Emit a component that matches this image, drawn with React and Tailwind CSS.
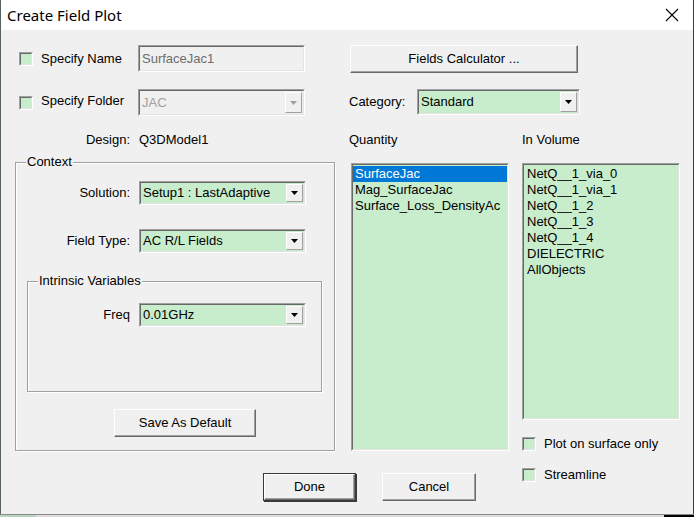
import React from 'react';

const font = { fontFamily: '"Liberation Sans", Arial, sans-serif' };

// sunken 3D field (classic windows)
const Sunken = ({ className = '', inner = '', children }) => (
  <div className={`border border-t-[#a0a0a0] border-l-[#a0a0a0] border-b-white border-r-white ${className}`}>
    <div className={`h-full w-full border border-t-[#696969] border-l-[#696969] border-b-[#e3e3e3] border-r-[#e3e3e3] ${inner}`}>
      {children}
    </div>
  </div>
);

const Check = () => (
  <Sunken className="h-[14px] w-[14px] shrink-0" inner="bg-[#c7edcc]" />
);

const Arrow = ({ disabled }) => (
  <div className="flex h-full w-[17px] shrink-0 items-center justify-center border border-t-white border-l-white border-b-[#a0a0a0] border-r-[#a0a0a0] bg-[#f0f0f0]">
    <svg width="8" height="4" viewBox="0 0 8 4">
      <path d="M0 0h7L3.5 4z" fill={disabled ? '#a0a0a0' : '#000'} />
    </svg>
  </div>
);

const Combo = ({ value, w = 'w-[167px]', h = 'h-[24px]', disabled }) => (
  <Sunken className={`${w} ${h} shrink-0`} inner={`flex items-stretch p-[1px] ${disabled ? 'bg-[#f0f0f0]' : 'bg-[#c7edcc]'}`}>
    <span className={`flex flex-1 items-center pl-[1px] ${disabled ? 'text-[#a0a0a0]' : 'text-black'}`}>{value}</span>
    <Arrow disabled={disabled} />
  </Sunken>
);

const Button = ({ children, className = '', isDefault }) => (
  <div className={`${isDefault ? 'border border-[#3a3a3a] shadow-[1px_1px_0_#3a3a3a]' : ''} ${className}`}>
    <div className="flex h-full w-full items-center justify-center border border-t-white border-l-white border-b-[#696969] border-r-[#696969] bg-[#f0f0f0] shadow-[inset_-1px_-1px_0_#a0a0a0]">
      {children}
    </div>
  </div>
);

const Group = ({ label, className = '', children }) => (
  <div className={`relative border border-[#a0a0a0] shadow-[inset_1px_1px_0_#fff,1px_1px_0_#fff] ${className}`}>
    <span className="absolute -top-[9px] left-[10px] bg-[#f0f0f0] px-[1px] leading-[16px]">{label}</span>
    {children}
  </div>
);

export default function App() {
  const quantities = ['SurfaceJac', 'Mag_SurfaceJac', 'Surface_Loss_DensityAc'];
  const volumes = ['NetQ__1_via_0', 'NetQ__1_via_1', 'NetQ__1_2', 'NetQ__1_3', 'NetQ__1_4', 'DIELECTRIC', 'AllObjects'];

  return (
    <div className="h-[517px] w-[694px] overflow-hidden bg-[#f0f0f0] text-[13px] text-black" style={font}>
      <div className="h-[514px] border-l border-r border-l-[#56625a] border-r-[#3c3c3c]">
        {/* title bar */}
        <div className="flex h-[30px] items-center justify-between bg-white pl-[6px] pr-[14px]">
          <span className="text-[15px] text-black" style={{ fontFamily: '"Noto Sans", "Open Sans", sans-serif' }}>
            Create Field Plot
          </span>
          <svg width="14" height="14" viewBox="0 0 14 14">
            <path d="M1 1l12 12M13 1L1 13" stroke="#000" strokeWidth="1.1" />
          </svg>
        </div>

        {/* top section */}
        <div className="flex pl-[14px]">
          <div className="w-[320px]">
            <div className="mt-[15px] flex h-[27px] items-center">
              <div className="ml-[4px]"><Check /></div>
              <span className="ml-[8px] w-[97px]">Specify Name</span>
              <Sunken className="h-[27px] w-[167px]" inner="bg-[#f0f0f0] px-[2px] pt-[2px] text-[#6d6d6d]">
                SurfaceJac1
              </Sunken>
            </div>
            <div className="mt-[17px] flex h-[27px] items-center">
              <div className="ml-[4px]"><Check /></div>
              <span className="ml-[8px] w-[97px] -translate-y-[2px]">Specify Folder</span>
              <Combo value="JAC" h="h-[27px]" disabled />
            </div>
            <div className="mt-[16px] flex h-[16px] items-center">
              <span className="w-[115px] text-right">Design:</span>
              <span className="ml-[9px]">Q3DModel1</span>
            </div>
          </div>

          <div className="ml-[14px] w-[331px]">
            <Button className="ml-[1px] mt-[15px] h-[28px] w-[228px]">Fields Calculator ...</Button>
            <div className="mt-[16px] flex h-[26px] items-center">
              <span className="w-[68px]">Category:</span>
              <Combo value="Standard" w="w-[163px]" h="h-[26px]" />
            </div>
            <div className="mt-[17px] flex h-[16px] items-center">
              <span className="w-[173px]">Quantity</span>
              <span>In Volume</span>
            </div>
          </div>
        </div>

        {/* middle + bottom */}
        <div className="flex pl-[14px]">
          <div className="w-[494px]">
            <div className="flex">
              <Group label="Context" className="mt-[14px] h-[289px] w-[320px]">
                <div className="flex items-center pt-[18px]">
                  <span className="w-[114px] text-right">Solution:</span>
                  <div className="ml-[9px]"><Combo value="Setup1 : LastAdaptive" /></div>
                </div>
                <div className="mt-[24px] flex items-center">
                  <span className="w-[114px] text-right">Field Type:</span>
                  <div className="ml-[9px]"><Combo value="AC R/L Fields" /></div>
                </div>
                <Group label="Intrinsic Variables" className="ml-[11px] mt-[28px] h-[111px] w-[295px]">
                  <div className="flex items-center pt-[21px]">
                    <span className="w-[102px] text-right">Freq</span>
                    <div className="ml-[9px]"><Combo value="0.01GHz" /></div>
                  </div>
                </Group>
                <Button className="ml-[98px] mt-[17px] h-[28px] w-[142px]">Save As Default</Button>
              </Group>

              <Sunken className="ml-[16px] mt-[15px] h-[288px] w-[158px]" inner="bg-[#c7edcc] pt-[1px]">
                {quantities.map((q, i) => (
                  <div key={q} className={`h-[16px] pl-[2px] leading-[16px] ${i === 0 ? 'bg-[#0078d7] text-white' : ''}`}>
                    {q}
                  </div>
                ))}
              </Sunken>
            </div>

            <div className="mt-[22px] flex">
              <Button isDefault className="ml-[248px] h-[28px] w-[93px]">Done</Button>
              <Button className="ml-[26px] h-[28px] w-[94px]">Cancel</Button>
            </div>
          </div>

          <div className="ml-[13px] w-[158px]">
            <Sunken className="mt-[15px] h-[257px] w-[158px]" inner="bg-[#c7edcc] pt-[1px]">
              {volumes.map((v) => (
                <div key={v} className="h-[16px] pl-[3px] leading-[16px]">{v}</div>
              ))}
            </Sunken>
            <div className="mt-[17px] flex h-[14px] items-center">
              <Check />
              <span className="ml-[8px]">Plot on surface only</span>
            </div>
            <div className="mt-[17px] flex h-[14px] items-center">
              <Check />
              <span className="ml-[8px]">Streamline</span>
            </div>
          </div>
        </div>
      </div>
      <div className="flex h-[3px] border-t border-[#8a8a8a] bg-[#dcdcdc]">
        <div className="w-[36px] bg-[#b9d3bd]" />
        <div className="flex-1" />
        <div className="w-[30px] bg-black" />
      </div>
    </div>
  );
}
